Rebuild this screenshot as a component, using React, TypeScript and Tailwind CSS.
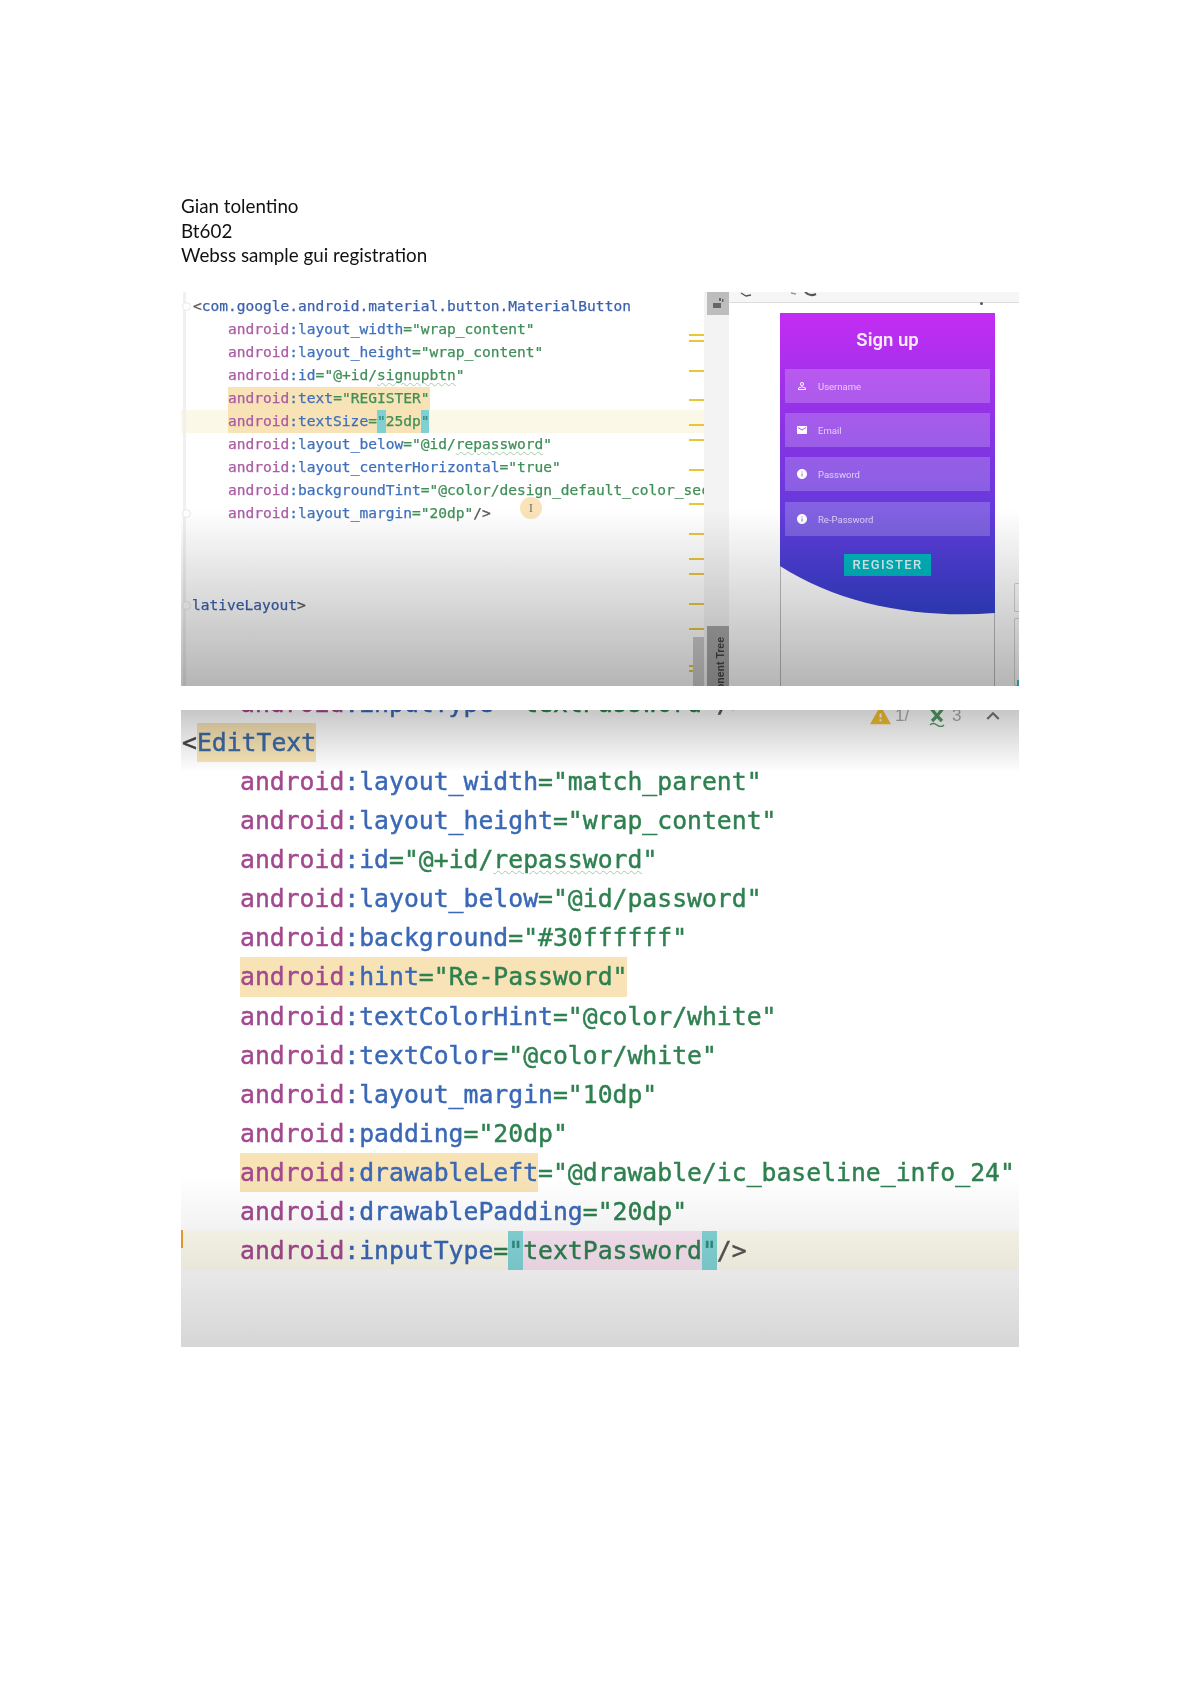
import { MdPersonOutline, MdEmail, MdInfo, MdWarning, MdKeyboardArrowUp } from "react-icons/md";

const mono = "font-['DejaVu_Sans_Mono',monospace]";

function Attr({ name, value, hlName, hlAll, palette, wavyPart }: {
  name: string; value: string; hlName?: boolean; hlAll?: boolean; palette: { ns: string; attr: string; val: string }; wavyPart?: string;
}) {
  const hl = hlName || hlAll ? "bg-[#f7e3b5]" : "";
  let inner: React.ReactNode = <span style={{ color: palette.val }}>"{value}"</span>;
  if (wavyPart) {
    const [a, b] = value.split(wavyPart);
    inner = (
      <span style={{ color: palette.val }}>
        "{a}<span className="underline decoration-wavy decoration-1 decoration-[#a9c9a9] underline-offset-2">{wavyPart}</span>{b}"
      </span>
    );
  }
  return (
    <>
      <span className={`flex items-center ${hl}`}>
        <span style={{ color: palette.ns }}>android</span>
        <span style={{ color: palette.attr }}>:{name}</span>
      </span>
      <span className={`flex items-center ${hlAll ? hl : ""}`}>
        <span style={{ color: palette.val }}>=</span>
        {inner}
      </span>
    </>
  );
}

const p1 = { ns: "#ad5aa6", attr: "#3f70bd", val: "#3f8f57" };
const p2 = { ns: "#a3488f", attr: "#3a68b6", val: "#2f8050" };

const markers = [334, 340, 370, 399, 424, 439, 469, 503, 533, 558, 573, 603, 628, 665, 670];

function Row1({ children, className = "" }: { children?: React.ReactNode; className?: string }) {
  return <div className={`flex h-[23px] items-stretch whitespace-nowrap pl-[47px] ${className}`}>{children}</div>;
}
function Row2({ children, className = "" }: { children?: React.ReactNode; className?: string }) {
  return <div className={`flex h-[39.1px] items-stretch whitespace-nowrap pl-[59px] ${className}`}>{children}</div>;
}

function Field({ icon, label }: { icon: React.ReactNode; label: string }) {
  return (
    <div className="flex h-[34px] items-center bg-white/20 pl-[11px] text-[9.5px] text-white/70">
      <span className="flex w-[22px] text-white">{icon}</span>
      <span className="translate-y-[1px]">{label}</span>
    </div>
  );
}

export default function App() {
  return (
    <div className="min-h-[1696px] bg-white pl-[181px] pt-[194px]">
      <div className="font-['Lato',sans-serif] text-[18.8px] leading-[24.6px] text-[#111] blur-[0.25px]">
        <div>Gian tolentino</div>
        <div>Bt602</div>
        <div>Webss sample gui registration</div>
      </div>

      {/* first screenshot */}
      <div className="relative mt-[24px] flex h-[394px] w-[838px] overflow-hidden bg-white blur-[0.45px]">
        <div className={`relative w-[523px] shrink-0 overflow-hidden pt-[3px] ${mono} text-[14.55px] [-webkit-text-stroke:0.25px]`}>
          <div className="absolute bottom-0 left-[2px] top-0 w-[3px] bg-[#f0f0f0]" />
          <div className="absolute left-[1px] top-[10px] h-[9px] w-[9px] rounded-full border border-[#e8e8e8] bg-white" />
          <div className="absolute left-[1px] top-[217px] h-[9px] w-[9px] rounded-full border border-[#e8e8e8] bg-white" />
          <div className="absolute left-[1px] top-[309px] h-[9px] w-[9px] rounded-full border border-[#e8e8e8] bg-white" />
          <div className="flex h-[23px] items-center whitespace-nowrap pl-[12px]">
            <span className="text-[#555]">&lt;</span>
            <span className="text-[#3d62ab]">com.google.android.material.button.MaterialButton</span>
          </div>
          <Row1><Attr name="layout_width" value="wrap_content" palette={p1} /></Row1>
          <Row1><Attr name="layout_height" value="wrap_content" palette={p1} /></Row1>
          <Row1><Attr name="id" value="@+id/signupbtn" palette={p1} wavyPart="signupbtn" /></Row1>
          <Row1><Attr name="text" value="REGISTER" palette={p1} hlAll /></Row1>
          <Row1 className="bg-[#fbf8e8]">
            <span className="flex items-center bg-[#f7e3b5]">
              <span style={{ color: p1.ns }}>android</span>
              <span style={{ color: p1.attr }}>:textSize</span>
              <span style={{ color: p1.val }}>=</span>
            </span>
            <span className="flex items-center bg-[#7fd0d3] text-[#2f8f80]">"</span>
            <span className="flex items-center bg-[#f7e3b5] text-[#3f8f57]">25dp</span>
            <span className="flex items-center bg-[#7fd0d3] text-[#2f8f80]">"</span>
          </Row1>
          <Row1><Attr name="layout_below" value="@id/repassword" palette={p1} wavyPart="repassword" /></Row1>
          <Row1><Attr name="layout_centerHorizontal" value="true" palette={p1} /></Row1>
          <Row1><Attr name="backgroundTint" value="@color/design_default_color_secondary" palette={p1} /></Row1>
          <Row1>
            <Attr name="layout_margin" value="20dp" palette={p1} />
            <span className="flex items-center text-[#555]">/&gt;</span>
          </Row1>
          <Row1 /><Row1 /><Row1 />
          <div className="flex h-[23px] items-center whitespace-nowrap pl-[11px]">
            <span className="text-[#3d62ab]">lativeLayout</span>
            <span className="text-[#555]">&gt;</span>
          </div>

          {/* mouse pointer halo */}
          <div className="absolute left-[339px] top-[205px] flex h-[22px] w-[22px] items-center justify-center rounded-full bg-[#fae3b8] font-['Liberation_Serif',serif] text-[13px] text-[#777] [-webkit-text-stroke:0px]">I</div>

          {/* error stripe */}
          {markers.map((y) => (
            <div key={y} className="absolute left-[508px] h-[2.5px] w-[15px] bg-[#e9c53a]" style={{ top: y - 292 }} />
          ))}
          <div className="absolute bottom-0 left-[512px] h-[49px] w-[11px] bg-[#cdcdcd]" />
        </div>

        <div className="flex w-[25px] shrink-0 flex-col justify-between bg-[#f3f3f3] pl-[3px]">
          <div className="flex h-[23px] items-center justify-center bg-[#bdbdbd]">
            <svg width="12" height="12" viewBox="0 0 12 12" fill="#666"><path d="M1 6h8v5H1zM7 1h2v3H7zM10 2h1.5v3H10z" /></svg>
          </div>
          <div className="flex h-[60px] justify-end overflow-hidden bg-[#a8a8a8] pr-[2px]">
            <span className="mt-[11px] h-fit rotate-180 whitespace-nowrap font-['Liberation_Sans',sans-serif] text-[10.5px] font-bold leading-[14px] text-[#444] [writing-mode:vertical-rl]">
              Component Tree
            </span>
          </div>
        </div>

        <div className="relative flex-1 bg-white">
          <div className="h-[11px] border-b border-[#dcdcdc] bg-[#f6f6f6]">
            <svg width="290" height="10" viewBox="0 0 290 10" fill="none" stroke="#555" strokeWidth="1.4">
              <path d="M12 1 L17 4 L22 3" />
              <path d="M62 1 L67 2" stroke="#999" />
              <path d="M76 0 Q81 5 87 2" strokeWidth="2" />
            </svg>
          </div>
          <div className="absolute left-[251px] top-[10px] h-[3px] w-[3px] rounded-full bg-[#555]" />

          {/* phone */}
          <div className="relative ml-[51px] mt-[10px] h-[373px] w-[215px] border-x border-[#bdbdbd] bg-white font-['Roboto',sans-serif]">
            <svg className="absolute -left-px top-0" width="215" height="304" viewBox="0 0 215 304">
              <defs>
                <linearGradient id="phoneGrad" x1="0" y1="0" x2="0" y2="1">
                  <stop offset="0" stopColor="#c42cf3" />
                  <stop offset="0.5" stopColor="#7a36e0" />
                  <stop offset="1" stopColor="#3442d1" />
                </linearGradient>
              </defs>
              <path d="M0 0H215V300C140 306 60 292 0 253Z" fill="url(#phoneGrad)" />
            </svg>
            <div className="relative flex flex-col items-stretch px-[4px]">
              <div className="flex h-[56px] items-center justify-center text-[18.5px] font-semibold text-white/90">Sign up</div>
              <div className="flex flex-col gap-[10.33px]">
                <Field icon={<MdPersonOutline size={12} />} label="Username" />
                <Field icon={<MdEmail size={12} />} label="Email" />
                <Field icon={<MdInfo size={12} />} label="Password" />
                <Field icon={<MdInfo size={12} />} label="Re-Password" />
              </div>
              <div className="mt-[18px] flex h-[22px] w-[87px] items-center justify-center self-center bg-[#00b6bf] text-[13px] font-medium tracking-[1.3px] text-white/85">
                REGISTER
              </div>
            </div>
          </div>

          <div className="absolute right-0 top-[291px] h-[29px] w-[5px] rounded-l-[2px] border border-r-0 border-[#d4d4d4]" />
          <div className="absolute right-0 top-[326px] h-[68px] w-[5px] rounded-l-[2px] border border-r-0 border-[#d4d4d4]" />
          <div className="absolute bottom-0 right-0 h-[6px] w-[2px] bg-[#39c4e0]" />
        </div>

        <div className="pointer-events-none absolute inset-0 bg-[linear-gradient(to_bottom,transparent_55%,rgba(0,0,0,0.29)_100%)]" />
      </div>

      {/* second screenshot */}
      <div className={`relative mt-[24px] h-[637px] w-[838px] overflow-hidden bg-white blur-[0.45px] ${mono} text-[24.75px] [-webkit-text-stroke:0.45px]`}>
        <div className="-mt-[26px]">
          <Row2>
            <Attr name="inputType" value="textPassword" palette={p2} />
            <span className="flex items-center text-[#555]">/&gt;</span>
          </Row2>
          <div className="flex h-[39.1px] items-stretch whitespace-nowrap pl-[1px]">
            <span className="flex items-center text-[#444]">&lt;</span>
            <span className="flex items-center bg-[#f7e3b5] text-[#3a68a6]">EditText</span>
          </div>
          <Row2><Attr name="layout_width" value="match_parent" palette={p2} /></Row2>
          <Row2><Attr name="layout_height" value="wrap_content" palette={p2} /></Row2>
          <Row2><Attr name="id" value="@+id/repassword" palette={p2} wavyPart="repassword" /></Row2>
          <Row2><Attr name="layout_below" value="@id/password" palette={p2} /></Row2>
          <Row2><Attr name="background" value="#30ffffff" palette={p2} /></Row2>
          <Row2><Attr name="hint" value="Re-Password" palette={p2} hlAll /></Row2>
          <Row2><Attr name="textColorHint" value="@color/white" palette={p2} /></Row2>
          <Row2><Attr name="textColor" value="@color/white" palette={p2} /></Row2>
          <Row2><Attr name="layout_margin" value="10dp" palette={p2} /></Row2>
          <Row2><Attr name="padding" value="20dp" palette={p2} /></Row2>
          <Row2><Attr name="drawableLeft" value="@drawable/ic_baseline_info_24" palette={p2} hlName /></Row2>
          <Row2><Attr name="drawablePadding" value="20dp" palette={p2} /></Row2>
          <Row2 className="bg-[#fffdee]">
            <span className="flex items-center">
              <span style={{ color: p2.ns }}>android</span>
              <span style={{ color: p2.attr }}>:inputType</span>
              <span style={{ color: p2.val }}>=</span>
            </span>
            <span className="flex items-center bg-[#84d6d9] text-[#2f8f80]">"</span>
            <span className="flex items-center bg-[#fbe6f4] text-[#2f8050]">textPassword</span>
            <span className="flex items-center bg-[#84d6d9] text-[#2f8f80]">"</span>
            <span className="flex items-center text-[#555]">/&gt;</span>
          </Row2>
        </div>

        <div className="absolute left-0 top-[520px] h-[18px] w-[2px] bg-[#f0a030]" />

        <div className="absolute right-[13px] top-0 flex h-[12px] items-center font-['Liberation_Sans',sans-serif] text-[17px] text-[#aaa] [-webkit-text-stroke:0px]">
          <MdWarning size={23} className="text-[#f2c030]" />
          <span className="ml-[3px] w-[32px]">1/</span>
          <svg width="20" height="22" viewBox="0 0 20 22" fill="none" stroke="#4f9a63" strokeWidth="3.2"><path d="M3 2 L10 11 L17 2 M10 11 L5 16 M10 11 L15 16" /><path d="M3 20 Q6 17 10 20 T17 20" strokeWidth="1.4" /></svg>
          <span className="ml-[5px] w-[28px]">3</span>
          <MdKeyboardArrowUp size={26} className="text-[#777]" />
        </div>

        <div className="pointer-events-none absolute inset-0 bg-[linear-gradient(to_bottom,rgba(0,0,0,0.22)_0px,transparent_62px,transparent_465px,rgba(0,0,0,0.16)_100%)]" />
      </div>
    </div>
  );
}
